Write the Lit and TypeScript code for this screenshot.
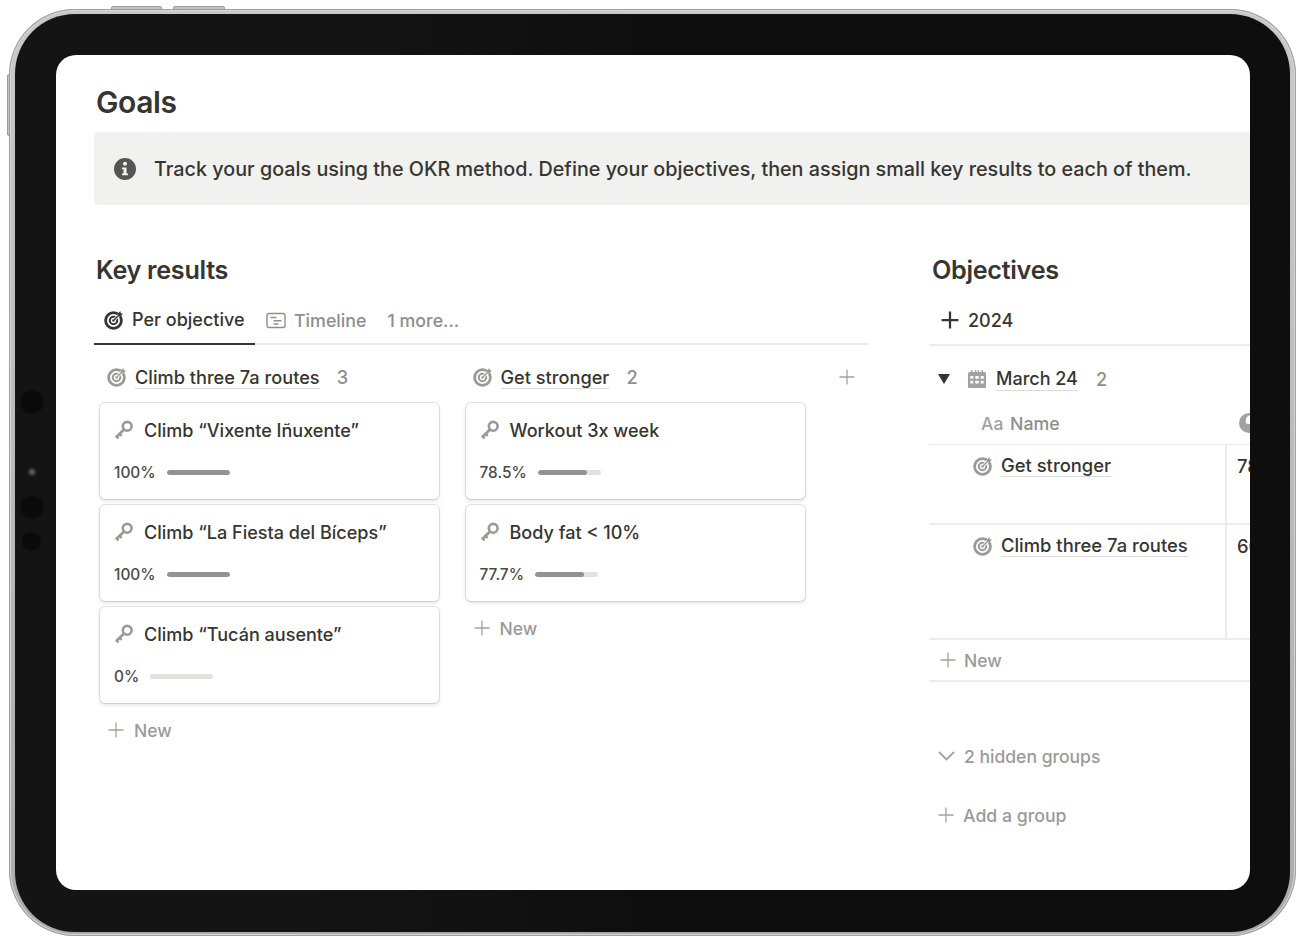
import { LitElement, html, css } from "lit";
import { customElement } from "lit/decorators.js";

const target = () => html`<svg class="ic" viewBox="0 0 20 20" fill="none" stroke="currentColor">
  <circle cx="9.500" cy="10.500" r="7.900" stroke-width="2.800"/>
  <circle cx="9.500" cy="10.500" r="3.700" stroke-width="2.100"/>
  <circle cx="9.500" cy="10.500" r="1.300" fill="currentColor" stroke="none"/>
  <path d="M10 10l5.500-5.500" stroke="#fff" stroke-width="3"/>
  <path d="M9.500 10.500l6-6" stroke-width="1.500"/>
  <path d="M13.800 3.700l.3 2.200 2.200.3 2.700-2.500-2.200-.5-.5-2.200z" fill="currentColor" stroke="none"/>
</svg>`;

const key = html`<svg class="ic key" viewBox="0 0 20 20" fill="none" stroke="currentColor">
  <circle cx="13.200" cy="6.300" r="4.400" stroke-width="2.600"/>
  <path d="M10 9.500L2.400 17.100" stroke-width="2.800"/>
  <path d="M4.700 13l3 3M1.800 15.800l2.700 2.700" stroke-width="2.400"/>
</svg>`;

const plus = (cls = "") => html`<svg class="plus ${cls}" viewBox="0 0 16 16" fill="none" stroke="currentColor" stroke-width="1.300"><path d="M8 .5v15M.5 8h15"/></svg>`;

const calendar = html`<svg class="ic cal" viewBox="0 0 18 18">
  <path fill-rule="evenodd" fill="currentColor" d="M3 0h1.500V2h2.500V0h1.300V2h1.400V0h1.300V2h2.500V0H15V2h1.500A1.500 1.500 0 0 1 18 3.500V17a1 1 0 0 1-1 1H1a1 1 0 0 1-1-1V3.500A1.500 1.500 0 0 1 1.500 2H3zM2.300 6v2.800h3V6zm5 0v2.800h3.400V6zm5.400 0v2.800h3V6zm-10.400 4.700v2.800h3v-2.800zm5 0v2.800h3.400v-2.800zm5.400 0v2.800h3v-2.800z"/>
</svg>`;

type KR = { title: string; pct: string; fill: number };
const columns: { name: string; count: number; items: KR[] }[] = [
  {
    name: "Climb three 7a routes",
    count: 3,
    items: [
      { title: "Climb “Vixente Iñuxente”", pct: "100%", fill: 100 },
      { title: "Climb “La Fiesta del Bíceps”", pct: "100%", fill: 100 },
      { title: "Climb “Tucán ausente”", pct: "0%", fill: 0 },
    ],
  },
  {
    name: "Get stronger",
    count: 2,
    items: [
      { title: "Workout 3x week", pct: "78.5%", fill: 78.5 },
      { title: "Body fat < 10%", pct: "77.7%", fill: 77.7 },
    ],
  },
];

@customElement("app-root")
export class AppRoot extends LitElement {
  static styles = css`
    :host {
      display: block;
      width: 1306px;
      height: 945px;
      background: #fff;
      font-family: Inter, "Liberation Sans", sans-serif;
      font-weight: 450;
      color: #37352f;
      overflow: hidden;
    }
    * { box-sizing: border-box; }
    .stage { padding: 9px 0 0 9px; }
    .frame {
      position: relative;
      width: 1287px;
      height: 927px;
      padding: 5px 6px 4px 6px;
      border-radius: 66px;
      background: linear-gradient(#c9c9c9, #a9aba9);
      box-shadow: inset 0 0 0 1px #9d9f9d, inset 0 0 0 2px #d8d8d8;
    }
    .btn { position: absolute; background: #c4c4c4; border: 1px solid #9a9a9a; }
    .btn-a { left: 102px; top: -3px; width: 51px; height: 4px; border-radius: 2px 2px 0 0; }
    .btn-b { left: 164px; top: -3px; width: 52px; height: 4px; border-radius: 2px 2px 0 0; }
    .btn-c { left: -2px; top: 65px; width: 3px; height: 62px; border-radius: 2px 0 0 2px; }
    .bezel {
      position: relative;
      height: 100%;
      padding: 41px 40px 42px 41px;
      border-radius: 60px;
      background-color: #0e0e0e;
      background-image: linear-gradient(90deg, #141414 0, #131313 30%, #0e0e0e 50%);
    }
    .sensor { position: absolute; border-radius: 50%; background: radial-gradient(#0a0a0a 55%, rgba(10, 10, 10, 0) 72%); }
    .s1 { left: 4px; top: 375px; width: 26px; height: 26px; }
    .s2 { left: 4px; top: 480px; width: 26px; height: 26px; }
    .s3 { left: 6px; top: 517px; width: 21px; height: 21px; }
    .cam { left: 14px; top: 455px; width: 6px; height: 6px; background: #4d4d4d; box-shadow: 0 0 0 2px #232323; }
    .screen {
      height: 100%;
      background: #fff;
      border-radius: 20px;
      overflow: hidden;
      padding: 27px 0 0 38px;
    }
    h1 { margin: 0 0 10px 2px; font-size: 30px; line-height: 40px; font-weight: 600; letter-spacing: -0.4px; }
    .callout {
      display: flex;
      align-items: center;
      width: 1240px;
      height: 73px;
      padding-left: 20px;
      gap: 18px;
      background: #f1f1ef;
      border-radius: 4px;
      font-size: 19.750px;
      white-space: nowrap;
    }
    .info { width: 22px; height: 22px; flex: none; color: #555; }
    .sections { display: flex; gap: 60px; margin-top: 45px; width: 1500px; }
    .left { width: 775px; flex: none; }
    .right { width: 500px; flex: none; }
    h2 { margin: 0 0 6px 2px; font-size: 25.200px; line-height: 40px; font-weight: 600; letter-spacing: -0.3px; }
    .right h2 { margin-left: 3px; }
    .tabs { display: flex; height: 49px; border-bottom: 2px solid #ececeb; font-size: 17.800px; }
    .tab { display: flex; align-items: center; color: #8f8e8a; white-space: nowrap; height: 49px; }
    .tab.on { width: 161px; padding-left: 10px; gap: 8px; color: #37352f; font-weight: 500; font-size: 18px; border-bottom: 2px solid #37352f; }
    .tab.tl { margin-left: 11px; gap: 8px; }
    .tab.more { margin-left: 21px; }
    .tab .ic { color: #37352f; }
    .tab.tl .ic { color: #8f8e8a; }
    .ic { width: 20px; height: 20px; flex: none; display: block; }
    .board { display: flex; padding: 12px 0 0 5px; position: relative; }
    .col { width: 341px; margin-right: 24.500px; flex: none; }
    .col-h { display: flex; align-items: center; height: 40px; padding-left: 8px; gap: 8px; font-size: 18.200px; margin-bottom: 6px; }
    .gray { color: #9b9a97; }
    .u { border-bottom: 1px solid #dcdbd8; line-height: 22px; white-space: nowrap; }
    .count { margin-left: 9px; color: #8f8e8a; }
    .add-col { width: 18px; height: 18px; margin: 12px 0 0 8.500px; color: #8f8e8a; flex: none; }
    .cards { display: flex; flex-direction: column; gap: 6px; margin: 0 1px; }
    .card {
      height: 96px;
      background: #fff;
      border-radius: 5px;
      box-shadow: 0 0 0 1px rgba(15, 15, 15, 0.11), 0 2px 4px rgba(15, 15, 15, 0.12);
      padding: 15px 14px 0 14px;
      overflow: hidden;
    }
    .ttl { display: flex; align-items: center; gap: 10px; height: 24px; font-size: 18.050px; white-space: nowrap; }
    .key { color: #9b9a97; }
    .meta { display: flex; align-items: center; gap: 11px; margin-top: 20px; height: 20px; font-size: 15.400px; color: #4c4a45; }
    .track { width: 63px; height: 5px; border-radius: 3px; background: #e3e2e0; overflow: hidden; }
    .fill { height: 100%; border-radius: 3px; background: #8f9391; }
    .new { display: flex; align-items: center; gap: 10px; height: 24px; margin: 15px 0 0 9px; font-size: 17.500px; color: #9b9a97; }
    .plus { width: 16px; height: 16px; flex: none; display: block; color: #a3a29f; }
    .r2024 { display: flex; align-items: center; height: 50px; padding-left: 12px; gap: 9px; font-size: 18px; font-weight: 500; border-bottom: 2px solid #ececeb; }
    .r2024 .plus { width: 18px; height: 18px; color: #37352f; stroke-width: 2; }
    .group { display: flex; align-items: center; height: 40px; margin-top: 13px; padding-left: 9px; font-size: 18px; }
    .tri { width: 12px; height: 10px; flex: none; color: #37352f; }
    .cal { width: 18px; height: 18px; color: #a3a29f; margin: 0 10px 0 18px; }
    .group .count { margin-left: 18px; }
    .thead { display: flex; align-items: center; height: 43px; margin-top: 3px; padding-left: 52px; font-size: 17.800px; color: #8f8e8a; border-bottom: 1px solid #e9e9e7; }
    .aa { font-size: 17.500px; color: #a3a29f; width: 29px; }
    .pie { width: 20px; height: 20px; margin-left: 179px; flex: none; color: #a3a29f; }
    .row { display: flex; border-bottom: 2px solid #ececeb; font-size: 18.400px; }
    .row.r1 { height: 80px; }
    .row.r2 { height: 115px; }
    .name { width: 298px; flex: none; display: flex; align-items: flex-start; gap: 8px; padding: 9px 0 0 44px; border-right: 2px solid #ececeb; }
    .name .ic { color: #9b9a97; margin-top: 2px; }
    .val { padding: 9px 0 0 10px; line-height: 24px; }
    .tnew { display: flex; align-items: center; gap: 8px; height: 42px; padding-left: 11px; font-size: 17.500px; color: #9b9a97; border-bottom: 2px solid #ececeb; }
    .hidden { display: flex; align-items: center; gap: 9px; height: 24px; margin: 62px 0 0 9px; font-size: 17.550px; color: #9b9a97; }
    .chev { width: 17px; height: 10px; flex: none; color: #a3a29f; }
    .addg { display: flex; align-items: center; gap: 9px; height: 24px; margin: 35px 0 0 9px; font-size: 17.700px; color: #9b9a97; }
  `;

  render() {
    return html`<div class="stage"><div class="frame">
      <i class="btn btn-a"></i><i class="btn btn-b"></i><i class="btn btn-c"></i>
      <div class="bezel">
        <i class="sensor s1"></i><i class="sensor cam"></i><i class="sensor s2"></i><i class="sensor s3"></i>
        <div class="screen">
          <h1>Goals</h1>
          <div class="callout">
            <svg class="info" viewBox="0 0 22 22"><path fill="currentColor" fill-rule="evenodd" d="M11 0a11 11 0 1 1 0 22a11 11 0 0 1 0-22zM11 3.800a2 2 0 1 0 0 4a2 2 0 0 0 0-4zM8 9.500v1.800h1.500v4.200H8v1.800h6v-1.800h-1.500V9.500z"/></svg>
            <span>Track your goals using the OKR method. Define your objectives, then assign small key results to each of them.</span>
          </div>
          <div class="sections">
            <section class="left">
              <h2>Key results</h2>
              <div class="tabs">
                <div class="tab on">${target()}<span>Per objective</span></div>
                <div class="tab tl">
                  <svg class="ic" viewBox="0 0 20 20" fill="none" stroke="currentColor" stroke-width="1.400"><rect x="1" y="2.500" width="18" height="14" rx="2"/><path d="M4.500 6.500h6M7.500 9.800h8M7.500 13h5"/></svg>
                  <span>Timeline</span>
                </div>
                <div class="tab more">1 more...</div>
              </div>
              <div class="board">
                ${columns.map(
                  (c) => html`<div class="col">
                    <div class="col-h"><span class="gray">${target()}</span><span class="u">${c.name}</span><span class="count">${c.count}</span></div>
                    <div class="cards">
                      ${c.items.map(
                        (k) => html`<div class="card">
                          <div class="ttl">${key}<span>${k.title}</span></div>
                          <div class="meta"><span>${k.pct}</span><div class="track"><div class="fill" style="width:${k.fill}%"></div></div></div>
                        </div>`
                      )}
                    </div>
                    <div class="new">${plus()}<span>New</span></div>
                  </div>`
                )}
                ${plus("add-col")}
              </div>
            </section>
            <section class="right">
              <h2>Objectives</h2>
              <div class="r2024">${plus()}<span>2024</span></div>
              <div class="group">
                <svg class="tri" viewBox="0 0 12 10"><path fill="currentColor" d="M0 0h12L6 10z"/></svg>
                ${calendar}<span class="u">March 24</span><span class="count">2</span>
              </div>
              <div class="thead"><span class="aa">Aa</span><span>Name</span>
                <svg class="pie" viewBox="0 0 20 20"><path fill="currentColor" fill-rule="evenodd" d="M10 0a10 10 0 1 1 0 20a10 10 0 0 1 0-20zM10.500 2.200C7 3.500 6.200 7 7 10.500L18 12C18.500 6 15 2.500 10.500 2.200z"/></svg>
              </div>
              <div class="row r1"><div class="name">${target()}<span class="u">Get stronger</span></div><div class="val">78.5%</div></div>
              <div class="row r2"><div class="name">${target()}<span class="u">Climb three 7a routes</span></div><div class="val">66.7%</div></div>
              <div class="tnew">${plus()}<span>New</span></div>
              <div class="hidden"><svg class="chev" viewBox="0 0 17 10" fill="none" stroke="currentColor" stroke-width="1.800"><path d="M1 1l7.500 7.500L16 1"/></svg><span>2 hidden groups</span></div>
              <div class="addg">${plus()}<span>Add a group</span></div>
            </section>
          </div>
        </div>
      </div>
    </div></div>`;
  }
}
